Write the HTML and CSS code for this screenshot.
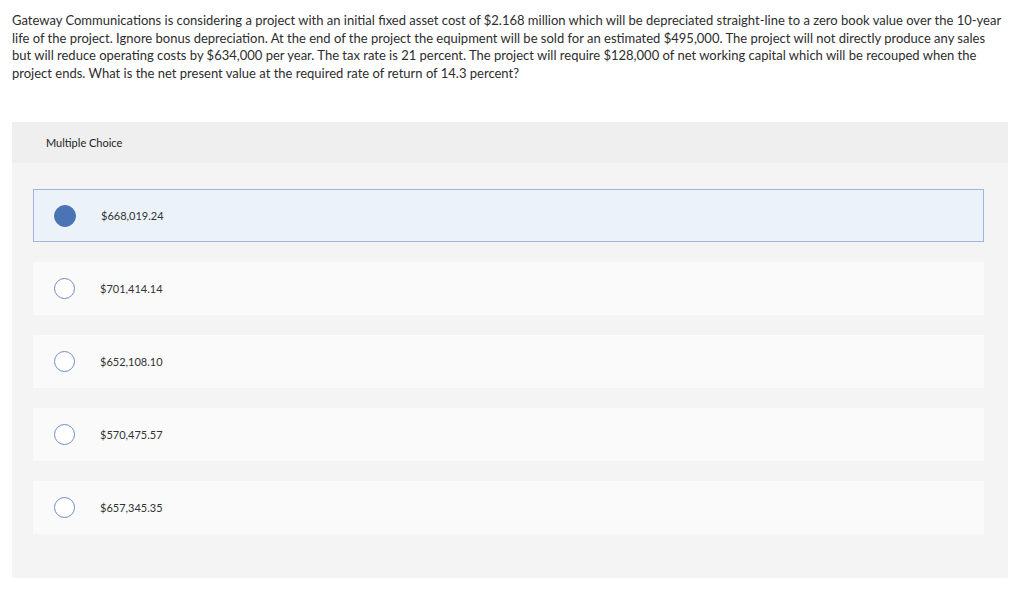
FILE: index.html
```html
<!DOCTYPE html>
<html>
<head>
<meta charset="utf-8">
<link rel="stylesheet" href="styles.css">
</head>
<body>
<p class="question">Gateway Communications is considering a project with an initial fixed asset cost of $2.168 million which will be depreciated straight-line to a zero book value over the 10-year life of the project. Ignore bonus depreciation. At the end of the project the equipment will be sold for an estimated $495,000. The project will not directly produce any sales but will reduce operating costs by $634,000 per year. The tax rate is 21 percent. The project will require $128,000 of net working capital which will be recouped when the project ends. What is the net present value at the required rate of return of 14.3 percent?</p>
<div class="panel">
  <div class="panel-head">Multiple Choice</div>
  <div class="panel-body">
    <div class="option selected"><span class="radio"></span><span class="label">$668,019.24</span></div>
    <div class="option"><span class="radio"></span><span class="label">$701,414.14</span></div>
    <div class="option"><span class="radio"></span><span class="label">$652,108.10</span></div>
    <div class="option"><span class="radio"></span><span class="label">$570,475.57</span></div>
    <div class="option"><span class="radio"></span><span class="label">$657,345.35</span></div>
  </div>
</div>
</body>
</html>
```
FILE: styles.css
```css
html, body { margin: 0; padding: 0; background: #fff; }
body {
  font-family: "Lato", "Open Sans", sans-serif;
  color: #333;
  padding: 12px 12px 0 12px;
}
.question {
  margin: 0;
  font-size: 13px;
  line-height: 17.5px;
  color: #2d2d2d;
  width: 990px;
}
.panel {
  margin-top: 40px;
  width: 996px;
  background: #f4f4f4;
  border-radius: 2px;
}
.panel-head {
  height: 41px;
  background: #efefef;
  font-size: 11px;
  line-height: 41px;
  padding-left: 34px;
  color: #222;
}
.panel-body {
  padding: 26px 24px 44px 21px;
  display: flex;
  flex-direction: column;
  gap: 20px;
}
.option {
  height: 53px;
  background: #fafafa;
  display: flex;
  align-items: center;
  box-sizing: border-box;
  padding-left: 20px;
  border: 1px solid transparent;
}
.option.selected {
  background: #ebf2fa;
  border-color: #9fb6da;
}
.radio {
  width: 21px;
  height: 21px;
  border-radius: 50%;
  border: 1px solid #6f8fbf;
  background: #fff;
  box-sizing: border-box;
  flex: none;
}
.selected .radio {
  width: 22px;
  height: 22px;
  background: #4a74b4;
  border-color: #4a74b4;
}
.label {
  margin-left: 25px;
  font-size: 11px;
  color: #333;
}
```
